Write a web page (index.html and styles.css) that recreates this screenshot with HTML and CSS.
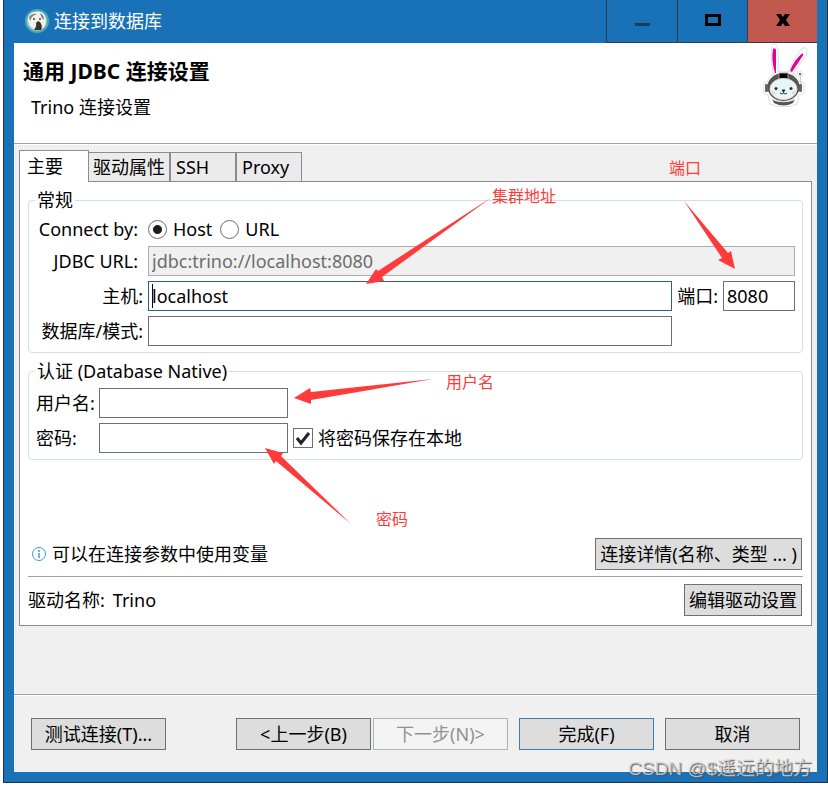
FILE: index.html
```html
<!DOCTYPE html>
<html lang="zh-CN">
<head>
  <meta charset="UTF-8">
  <meta name="viewport" content="width=device-width, initial-scale=1.0">
  <title>连接到数据库</title>
  <link rel="stylesheet" href="styles.css">
</head>
<body>
  <div class="window">
    <div class="titlebar">
      <svg class="app-icon" viewBox="0 0 24 24" aria-hidden="true">
        <circle cx="12" cy="12" r="12" fill="#4ea9b3"/>
        <circle cx="12" cy="12" r="10" fill="#a5d3d3"/>
        <path d="M3 9 Q4 3 11 3 Q18 2 20 7 Q22 14 19 18 L15 21 L9 20 Q3 17 3 9Z" fill="#f3f1ee"/>
        <path d="M4 8 Q7 4 12 5 Q9 6 7 8 L5 12Z" fill="#8b8683"/>
        <path d="M15 4 Q19 6 19 11 L17 9Z" fill="#77716d"/>
        <path d="M11 14 Q13 11 15 13 Q18 17 16 21 L9 21 Q12 17 11 14Z" fill="#3a302d"/>
        <circle cx="9" cy="10" r="1" fill="#4a4442"/>
        <circle cx="15" cy="10" r="1" fill="#4a4442"/>
      </svg>
      <span class="window-title">连接到数据库</span>
      <div class="window-controls">
        <button class="control" aria-label="最小化">
          <svg width="16" height="16" viewBox="0 0 16 16"><path d="M1 11h15v3H1z" fill="#123f63"/></svg>
        </button>
        <button class="control" aria-label="最大化">
          <svg width="16" height="16" viewBox="0 0 16 16"><path d="M1.5 3.5h13v9h-13z" fill="none" stroke="#000" stroke-width="3"/></svg>
        </button>
        <button class="control close" aria-label="关闭">
          <svg width="16" height="16" viewBox="0 0 16 16"><path d="M1 2h5l2 3 2-3h5l-4 6 4 6h-5l-2-3-2 3H1l4-6z" fill="#000"/></svg>
        </button>
      </div>
    </div>

    <div class="dialog">
      <div class="header">
        <div class="heading">
          <h1>通用 JDBC 连接设置</h1>
          <p>Trino 连接设置</p>
        </div>
        <svg class="rabbit" viewBox="8 3 48 64" aria-hidden="true">
          <g fill="#fff" stroke="#dedede" stroke-width="1">
            <path d="M18 33 Q14 4 19 3.500 Q25 4 23 33Z"/>
            <path d="M33 32 Q43 10 49 7.500 Q54 8 51 15 Q45 25 37 34Z"/>
            <circle cx="45" cy="34" r="2.500"/>
            <path d="M12 42 Q16 31 28.500 31 Q41 31 45 42 L49 43 L49 53 L44 55 L42 64 Q28 70 15 64 L13 55 L8.500 53 L9 43Z"/>
          </g>
          <path d="M18 9 Q20 7 21 10 L21 33 L20 33 Q16 20 18 9Z" fill="#e4009b"/>
          <path d="M35 31 Q39 20 47 13.500 Q49 13 48 15.500 Q43 23 37 32Z" fill="#e4009b"/>
          <rect x="10" y="44" width="3" height="8" rx="1" fill="#666"/>
          <rect x="44" y="44" width="3" height="8" rx="1" fill="#666"/>
          <path d="M45 34 L46 44" stroke="#ccc" stroke-width="1"/>
          <circle cx="45" cy="34" r="1" fill="#444"/>
          <ellipse cx="28.500" cy="47" rx="16" ry="14" fill="#555"/>
          <path d="M24 33h9v6h-9z" fill="#000" stroke="#999" stroke-width="1"/>
          <ellipse cx="28.500" cy="49" rx="13.500" ry="10.500" fill="#e8f6f6" stroke="#ddd" stroke-width="1"/>
          <path d="M17 59 Q28.500 64 40 59 L38 63 Q28.500 68 19 63Z" fill="#555"/>
          <path d="M17 59.500 Q28.500 64 40 59.500" fill="none" stroke="#eee" stroke-width="1"/>
          <circle cx="21" cy="48.500" r="1.500" fill="#1c343b"/>
          <circle cx="36" cy="48.500" r="1.500" fill="#1c343b"/>
          <circle cx="18" cy="53" r="2" fill="#f3d5d0"/>
          <circle cx="39" cy="53" r="2" fill="#f3d5d0"/>
          <path d="M27 50h3l-1.500 2z" fill="#1c343b" stroke="#1c343b"/>
          <path d="M25 53 Q27 55 28.500 53 Q30 55 32 53 M28.500 51v2" fill="none" stroke="#1c343b" stroke-width="1"/>
        </svg>
      </div>

      <div class="content">
        <div class="tabs" role="tablist">
          <button class="tab active" role="tab" aria-selected="true">主要</button>
          <button class="tab" role="tab">驱动属性</button>
          <button class="tab tab-ssh" role="tab">SSH</button>
          <button class="tab tab-proxy" role="tab">Proxy</button>
        </div>
        <div class="panel">
          <fieldset>
            <legend>常规</legend>
            <div class="general">
              <span class="label latin">Connect by:</span>
              <div class="radios">
                <input type="radio" name="mode" id="by-host" checked>
                <label for="by-host">Host</label>
                <input type="radio" name="mode" id="by-url">
                <label for="by-url">URL</label>
              </div>
              <label class="label latin" for="jdbc">JDBC URL:</label>
              <input class="wide" type="text" id="jdbc" value="jdbc:trino://localhost:8080" disabled>
              <label class="label" for="host">主机:</label>
              <div class="host-box">
                <input class="focused" type="text" id="host" value="localhost">
                <span class="caret"></span>
              </div>
              <label for="port">端口:</label>
              <input type="text" id="port" value="8080">
              <label class="label" for="database">数据库/模式:</label>
              <input type="text" id="database">
            </div>
          </fieldset>

          <fieldset>
            <legend>认证 (Database Native)</legend>
            <div class="auth">
              <label for="user">用户名:</label>
              <input type="text" id="user">
              <label class="first" for="password">密码:</label>
              <input type="password" id="password">
              <div class="save">
                <input type="checkbox" id="save" checked>
                <label for="save">将密码保存在本地</label>
              </div>
            </div>
          </fieldset>

          <div class="row info-row">
            <svg class="info-icon" viewBox="0 0 14 14" aria-hidden="true">
              <circle cx="7" cy="7" r="6.500" fill="none" stroke="#3c9bd6"/>
              <path d="M6 3h2v2H6zM6 6h2v5H6z" fill="#6db4e0"/>
            </svg>
            <span>可以在连接参数中使用变量</span>
            <button class="btn">连接详情(名称、类型 ... )</button>
          </div>
          <div class="row driver-row">
            <span>驱动名称:</span>
            <span>Trino</span>
            <button class="btn">编辑驱动设置</button>
          </div>
        </div>
      </div>

      <div class="footer">
        <button class="btn">测试连接(T)...</button>
        <div class="wizard">
          <div class="steps">
            <button class="btn">&lt;上一步(B)</button>
            <button class="btn" disabled>下一步(N)&gt;</button>
          </div>
          <button class="btn default">完成(F)</button>
          <button class="btn">取消</button>
        </div>
      </div>
    </div>
  </div>

  <!-- notes drawn over the dialog -->
  <svg class="arrows" width="828" height="788" viewBox="0 0 828 788" aria-hidden="true">
    <path d="M366 284 L376 269 L378 271 L492 197 L382 277 L384 281Z"/>
    <path d="M735 269 L731 251 L728 253 L684 201 L722 258 L718 260Z"/>
    <path d="M294 398 L310 388 L311 392 L433 379 L311 400 L311 404Z"/>
    <path d="M265 448 L283 453 L281 456 L351 524 L276 461 L274 464Z"/>
  </svg>
  <span class="note note-host">集群地址</span>
  <span class="note note-port">端口</span>
  <span class="note note-user">用户名</span>
  <span class="note note-password">密码</span>
  <span class="watermark">CSDN @$遥远的地方</span>
</body>
</html>
```
FILE: styles.css
```css
:root {
  --blue: #1971b8;
  --face: #f0f0f0;
  --line: #a0a0a0;
  --field: #6f6f6f;
  --tab-line: #8b8b97;
  --red: #ff3a3a;
}
* {
  box-sizing: border-box;
}
body {
  margin: 0;
  min-height: 100vh;
  padding: 0 0 5px 3px;
  position: relative;
  display: flex;
  background: #fff;
  color: #000;
  font-family: "Noto Sans", "Noto Sans CJK SC", sans-serif;
  font-size: 18px;
  line-height: 24px;
}
button, input {
  font: inherit;
  color: inherit;
}
.window {
  flex: 1;
  display: flex;
  flex-direction: column;
  background: var(--blue);
  border: 1px solid #24303c;
  border-top: none;
  padding: 0 10px 10px;
}

/* title bar */
.titlebar {
  display: flex;
  align-items: center;
  height: 43px;
  padding: 0 0 2px 11px;
  color: #fff;
}
.app-icon {
  width: 24px;
  height: 24px;
  margin-right: 5px;
}
.window-controls {
  display: flex;
  align-self: stretch;
  margin: 0 0 -2px auto;
}
.control {
  width: 70px;
  padding: 0 0 2px;
  display: flex;
  align-items: center;
  justify-content: center;
  background: var(--blue);
  border: 1px solid #333a48;
  border-width: 0 0 1px 1px;
}
.control:first-child {
  width: 71px;
}
.control.close {
  background: #c1594f;
}

/* dialog */
.dialog {
  flex: 1;
  display: flex;
  flex-direction: column;
  background: var(--face);
}
.header {
  display: flex;
  justify-content: space-between;
  align-items: flex-start;
  height: 101px;
  padding: 0 6px 0 9px;
  background: #fff;
  border-bottom: 1px solid var(--line);
}
.heading {
  padding-top: 16px;
}
.heading h1 {
  margin: 0;
  font-size: 21px;
  line-height: 24px;
}
.heading p {
  margin: 12px 0 0 8px;
}
.rabbit {
  width: 48px;
  height: 64px;
}
.content {
  flex: 1;
  padding: 5px 5px 0;
  border-top: 1px solid #fff;
}
.tabs {
  display: flex;
  align-items: flex-end;
}
.tab {
  height: 29px;
  padding: 0 4px;
  text-align: left;
  line-height: 28px;
  background: #ebebeb;
  border: 1px solid var(--tab-line);
  border-bottom: none;
  border-left-width: 0;
  border-right-width: 2px;
}
.tab:last-child {
  border-right-width: 1px;
}
.tab.active {
  position: relative;
  z-index: 1;
  width: 70px;
  height: 32px;
  margin-bottom: -1px;
  padding: 0 7px 2px;
  background: #fff;
  border-width: 1px 1px 0;
}
.tab-ssh {
  width: 66px;
  padding-left: 5px;
}
.tab-proxy {
  width: 65px;
  padding-left: 5px;
}
.panel {
  padding: 6px 8px 9px;
  background: #fff;
  border: 1px solid var(--tab-line);
}

/* groups */
fieldset {
  min-width: 0;
  margin: 0 0 6px;
  padding: 5px 7px 6px;
  border: 1px solid #d5dfe5;
  border-radius: 4px;
}
legend {
  margin-left: -1px;
  padding: 0 2px;
}
label {
  white-space: nowrap;
}
.general, .auth {
  display: grid;
  gap: 5px;
  align-items: center;
}
.general {
  grid-template-columns: 107px 1fr auto 72px;
}
.auth {
  grid-template-columns: 58px 189px 1fr;
}
.label {
  text-align: right;
}
.latin {
  padding-right: 5px;
}
.auth .first {
  grid-column: 1;
}
#database {
  grid-column: 2;
}
.wide, .radios {
  grid-column: 2 / -1;
}
input[type="text"], input[type="password"] {
  width: 100%;
  min-width: 0;
  height: 30px;
  padding: 0 3px;
  background: #fff;
  border: 1px solid var(--field);
  border-radius: 0;
  outline: none;
}
input[type="text"]:disabled {
  background: var(--face);
  border-color: #adadad;
  color: #6d6d6d;
}
input[type="text"].focused {
  border-color: #2b6288;
}
.host-box {
  position: relative;
  display: flex;
}
.caret {
  position: absolute;
  left: 4px;
  top: 3px;
  width: 1px;
  height: 24px;
  background: #000;
}
.radios, .save {
  display: flex;
  align-items: center;
}
.radios label {
  margin: 0 8px 0 6px;
}
input[type="radio"], input[type="checkbox"] {
  appearance: none;
  flex: none;
  margin: 0;
  border: 1px solid var(--field);
  background: #fff;
}
input[type="radio"] {
  width: 19px;
  height: 19px;
  border-radius: 50%;
}
input[type="radio"]:checked {
  background: radial-gradient(circle, #1e1e1e 4px, #fff 5px);
}
input[type="checkbox"] {
  width: 20px;
  height: 20px;
  margin-right: 5px;
}
input[type="checkbox"]:checked {
  background: url("data:image/svg+xml,%3Csvg xmlns='http://www.w3.org/2000/svg' viewBox='0 0 18 18'%3E%3Cpath d='M3 9l4 5 8-10' fill='none' stroke='%23222' stroke-width='3'/%3E%3C/svg%3E");
}

/* rows under the groups */
.row {
  display: flex;
  align-items: center;
}
.row .btn {
  margin: 0 1px 0 auto;
}
.info-row {
  margin-top: 78px;
  padding: 0 0 6px 4px;
  border-bottom: 1px solid var(--line);
}
.info-icon {
  width: 14px;
  height: 14px;
  margin-right: 6px;
}
.driver-row {
  gap: 8px;
  padding-top: 7px;
}
.btn {
  height: 32px;
  padding: 0 4px;
  line-height: 28px;
  white-space: nowrap;
  background: #ddd;
  border: 1px solid #707070;
  border-radius: 0;
}
.btn.default {
  border-color: #3c7fb1;
}
.btn:disabled {
  background: #f4f4f4;
  border-color: #adb2b5;
  color: #919191;
}

/* footer */
.footer {
  display: flex;
  justify-content: space-between;
  padding: 23px 17px 22px;
  border-top: 1px solid var(--line);
  box-shadow: inset 0 1px #fff;
}
.footer .btn {
  width: 135px;
}
.wizard {
  display: flex;
  gap: 11px;
}
.steps {
  display: flex;
  gap: 2px;
}

/* notes */
.arrows {
  position: absolute;
  left: 0;
  top: 0;
  fill: var(--red);
  pointer-events: none;
}
.note {
  position: absolute;
  color: var(--red);
  font-size: 16px;
  pointer-events: none;
}
.note-host {
  left: 492px;
  top: 184px;
}
.note-port {
  left: 669px;
  top: 156px;
}
.note-user {
  left: 446px;
  top: 370px;
}
.note-password {
  left: 376px;
  top: 507px;
}
.watermark {
  position: absolute;
  right: 16px;
  bottom: 7px;
  font-family: "Liberation Sans", "Noto Sans CJK SC", sans-serif;
  font-size: 19px;
  color: rgba(215, 215, 215, 0.8);
  text-shadow: 1px 1px 1px #555;
}
```
